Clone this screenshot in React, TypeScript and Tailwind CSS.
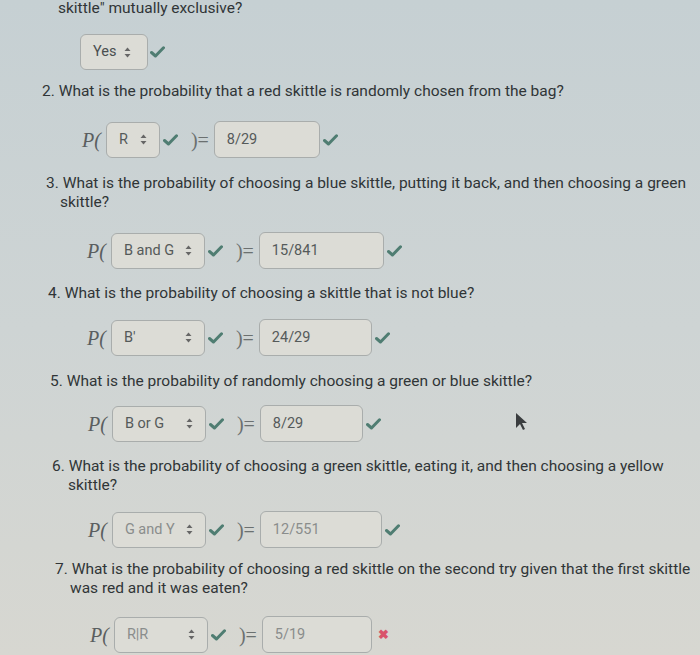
import React from "react";

function Check({ className = "" }: { className?: string }) {
  return (
    <svg width="15" height="12" viewBox="0 0 15 12" className={className}>
      <path d="M1.5 6.5 L5.5 10 L13.5 1.8" fill="none" stroke="#4f7d72" strokeWidth="3" strokeLinecap="round" strokeLinejoin="round" />
    </svg>
  );
}

function Arrows() {
  return (
    <svg width="7" height="11" viewBox="0 0 7 11">
      <path d="M3.5 0.5 L6.5 4 L0.5 4 Z" fill="#666" />
      <path d="M3.5 10.5 L6.5 7 L0.5 7 Z" fill="#666" />
    </svg>
  );
}

interface RowProps {
  wrap: string;
  sel: string;
  label: string;
  input: string;
  value: string;
  wrong?: boolean;
  faded?: boolean;
}

function AnswerRow({ wrap, sel, label, input, value, wrong, faded }: RowProps) {
  const txt = faded ? "text-[#8a8d8c]" : "text-[#555a5a]";
  return (
    <div className={`flex items-center ${wrap}`}>
      <span className="font-['Liberation_Serif',serif] italic text-[20px] text-[#5a5e60] mr-[5px]">P(</span>
      <div className={`flex items-center justify-between rounded-[6px] border-[1.5px] border-[#a9adac] bg-[#dcdcd6] px-[12px] h-[36px] ${sel}`}>
        <span className={`text-[14.5px] ${txt}`}>{label}</span>
        <Arrows />
      </div>
      <Check className="ml-[3px]" />
      <span className="font-['Liberation_Serif',serif] text-[20px] text-[#6b7070] ml-[13px] mr-[5px]">)=</span>
      <div className={`flex items-center rounded-[6px] border-[1.5px] border-[#a9adac] bg-[#dcdcd6] px-[12px] h-[37px] ${input}`}>
        <span className={`text-[14.5px] ${txt}`}>{value}</span>
      </div>
      {wrong ? (
        <span className="ml-[6px] text-[13px] text-[#d9536b] font-bold">✖</span>
      ) : (
        <Check className="ml-[3px]" />
      )}
    </div>
  );
}

export default function App() {
  return (
    <div className="relative w-[700px] h-[655px] overflow-hidden bg-linear-to-b from-[#c6d0d3] via-[#ced4d4] to-[#d7d7d1] font-['Roboto',sans-serif] text-[15.5px] text-[#303537]">
      <div className="-mt-[2px] ml-[58px] leading-[20px]">skittle" mutually exclusive?</div>

      <div className="mt-[16px] ml-[80px] flex items-center">
        <div className="flex items-center gap-[8px] rounded-[6px] border-[1.5px] border-[#a9adac] bg-[#dcdcd6] pl-[12px] pr-[14px] h-[36px] w-[68px]">
          <span className="text-[14.5px] text-[#4a4f50]">Yes</span>
          <Arrows />
        </div>
        <Check className="ml-[2px]" />
      </div>

      <div className="mt-[11px] ml-[42px] leading-[20px]">2. What is the probability that a red skittle is randomly chosen from the bag?</div>
      <AnswerRow wrap="mt-[20px] ml-[82px]" sel="w-[54px]" label="R" input="w-[106px]" value="8/29" />

      <div className="mt-[16px] ml-[46px] mr-[10px] leading-[19px] pl-[14px] -indent-[14px]">
        3. What is the probability of choosing a blue skittle, putting it back, and then choosing a green skittle?
      </div>
      <AnswerRow wrap="mt-[20px] ml-[87px]" sel="w-[94px]" label="B and G" input="w-[125px]" value="15/841" />

      <div className="mt-[14px] ml-[48px] leading-[20px]">4. What is the probability of choosing a skittle that is not blue?</div>
      <AnswerRow wrap="mt-[16px] ml-[87px]" sel="w-[94px]" label="B'" input="w-[113px]" value="24/29" />

      <div className="mt-[15px] ml-[50px] leading-[20px]">5. What is the probability of randomly choosing a green or blue skittle?</div>
      <AnswerRow wrap="mt-[14px] ml-[88px]" sel="w-[94px]" label="B or G" input="w-[103px]" value="8/29" />

      <div className="mt-[15px] ml-[52px] mr-[20px] leading-[19px] pl-[16px] -indent-[16px]">
        6. What is the probability of choosing a green skittle, eating it, and then choosing a yellow skittle?
      </div>
      <AnswerRow wrap="mt-[16px] ml-[88px]" sel="w-[94px]" label="G and Y" input="w-[122px]" value="12/551" faded />

      <div className="mt-[12px] ml-[55px] mr-[2px] leading-[19px] pl-[15px] -indent-[15px]">
        7. What is the probability of choosing a red skittle on the second try given that the first skittle was red and it was eaten?
      </div>
      <AnswerRow wrap="mt-[18px] ml-[90px]" sel="w-[94px]" label="R|R" input="w-[110px]" value="5/19" wrong faded />

      <svg className="absolute left-[514px] top-[412px]" width="16" height="20" viewBox="0 0 16 20">
        <path d="M2 1 L2 16 L6 12 L9 18 L11 17 L8 11 L13 11 Z" fill="#3a3d3f" />
      </svg>
    </div>
  );
}
